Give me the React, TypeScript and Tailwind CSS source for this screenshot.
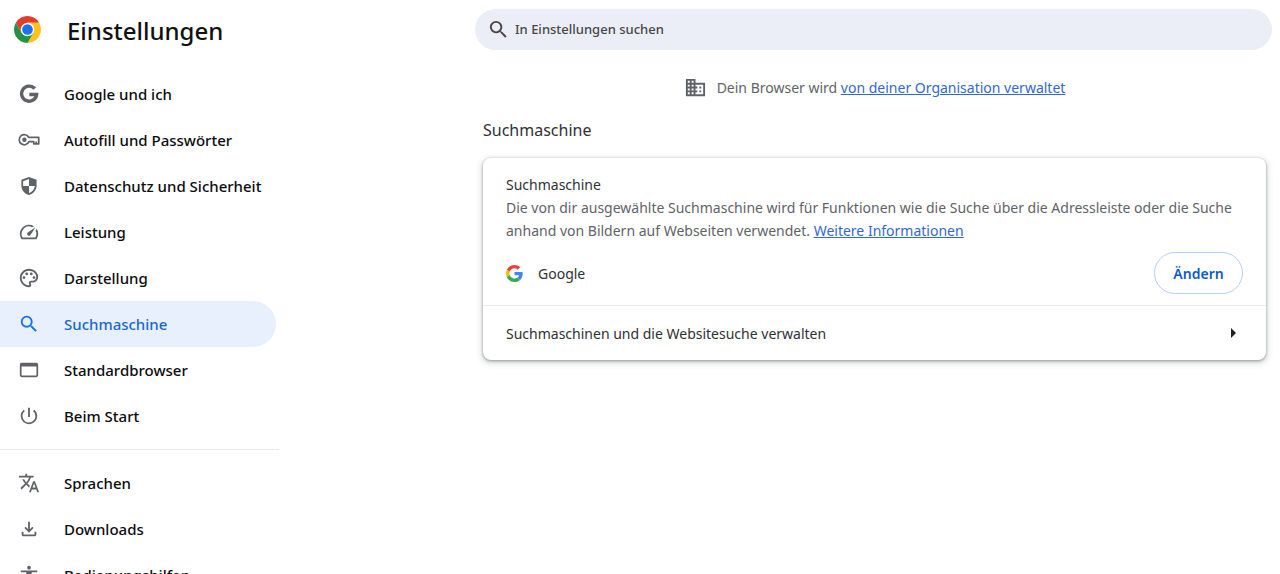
import type { ReactNode } from "react";
import {
  MdAccessibility,
  MdBusiness,
  MdOutlineFileDownload,
  MdOutlinePalette,
  MdPowerSettingsNew,
  MdSearch,
  MdSpeed,
  MdTranslate,
} from "react-icons/md";

function ChromeLogo() {
  return (
    <svg viewBox="0 0 48 48" className="size-[27px] shrink-0" aria-hidden="true">
      <path fill="#e33b2e" d="M24 12h20.78a24 24 0 0 0-41.56 0l10.39 18z" />
      <path fill="#fcc31e" d="M34.39 30 24 48a24 24 0 0 0 20.78-36H24z" />
      <path fill="#229342" d="M13.61 30 3.22 12A24 24 0 0 0 24 48l10.39-18z" />
      <circle cx="24" cy="24" r="12" fill="#fff" />
      <circle cx="24" cy="24" r="9.5" fill="#1a73e8" />
    </svg>
  );
}

function GoogleColor() {
  return (
    <svg viewBox="0 0 48 48" className="size-[17px] shrink-0" aria-hidden="true">
      <path fill="#ea4335" d="M24 9.5c3.54 0 6.71 1.22 9.21 3.6l6.85-6.85C35.9 2.38 30.47 0 24 0 14.62 0 6.51 5.38 2.56 13.22l7.98 6.19C12.43 13.72 17.74 9.5 24 9.5z" />
      <path fill="#4285f4" d="M46.98 24.55c0-1.57-.15-3.09-.38-4.55H24v9.02h12.94c-.58 2.96-2.26 5.48-4.78 7.18l7.73 6c4.51-4.18 7.09-10.36 7.09-17.65z" />
      <path fill="#fbbc05" d="M10.53 28.59c-.48-1.45-.76-2.99-.76-4.59s.27-3.14.76-4.59l-7.98-6.19C.92 16.46 0 20.12 0 24c0 3.88.92 7.54 2.56 10.78l7.97-6.19z" />
      <path fill="#34a853" d="M24 48c6.48 0 11.93-2.13 15.89-5.81l-7.73-6c-2.15 1.45-4.92 2.3-8.16 2.3-6.26 0-11.57-4.22-13.47-9.91l-7.98 6.19C6.51 42.62 14.62 48 24 48z" />
    </svg>
  );
}

function GoogleMono() {
  return (
    <svg viewBox="0 0 24 24" fill="none" stroke="currentColor" strokeWidth="3.7" aria-hidden="true">
      <path d="M18.3 6.2A8.2 8.2 0 1 0 20.3 12.5H12.4" />
    </svg>
  );
}

function KeyIcon() {
  return (
    <svg viewBox="0 0 24 24" fill="none" stroke="currentColor" strokeWidth="1.9" aria-hidden="true">
      <path d="M11.7 9.2H22.6V16.2H17.2V13.7H11.9A5.5 5.5 0 1 1 11.7 9.2Z" strokeLinejoin="round" />
      <path d="M19.9 13.6v2.4" />
      <circle cx="7" cy="11.7" r="2.4" fill="currentColor" stroke="none" />
    </svg>
  );
}

function ShieldIcon() {
  return (
    <svg viewBox="0 0 24 24" fill="currentColor" aria-hidden="true">
      <path
        fillRule="evenodd"
        d="M12 2.2 20.3 5.3V11.4C20.3 16.3 16.8 20.7 12 21.9 7.2 20.7 3.7 16.3 3.7 11.4V5.3ZM12 4.3 5.6 6.7V12H12ZM12 12V19.9C15.4 18.7 18 15.6 18.4 12Z"
      />
    </svg>
  );
}

function BrowserIcon() {
  return (
    <svg viewBox="0 0 24 24" fill="currentColor" aria-hidden="true">
      <path
        fillRule="evenodd"
        d="M4 4.2H20A2 2 0 0 1 22 6.2V17.8A2 2 0 0 1 20 19.8H4A2 2 0 0 1 2 17.8V6.2A2 2 0 0 1 4 4.2ZM3.9 8.2V17.9H20.1V8.2Z"
      />
    </svg>
  );
}

type Item = { label: string; icon: ReactNode; active?: boolean };

const mainItems: Item[] = [
  { label: "Google und ich", icon: <GoogleMono /> },
  { label: "Autofill und Passwörter", icon: <KeyIcon /> },
  { label: "Datenschutz und Sicherheit", icon: <ShieldIcon /> },
  { label: "Leistung", icon: <MdSpeed /> },
  { label: "Darstellung", icon: <MdOutlinePalette /> },
  { label: "Suchmaschine", icon: <MdSearch />, active: true },
  { label: "Standardbrowser", icon: <BrowserIcon /> },
  { label: "Beim Start", icon: <MdPowerSettingsNew /> },
];

const moreItems: Item[] = [
  { label: "Sprachen", icon: <MdTranslate /> },
  { label: "Downloads", icon: <MdOutlineFileDownload /> },
  { label: "Bedienungshilfen", icon: <MdAccessibility /> },
];

function MenuList({ items }: { items: Item[] }) {
  return (
    <ul className="pr-[3px]">
      {items.map(({ label, icon, active }) => (
        <li key={label}>
          <a
            href="#"
            aria-current={active ? "page" : undefined}
            className={
              active
                ? "flex h-[46px] items-center gap-6 rounded-r-full bg-[#e8f0fe] pl-[18px] text-[#1967d2]"
                : "flex h-[46px] items-center gap-6 pl-[18px] text-[#0c0c0e]"
            }
          >
            <span
              className={
                active
                  ? "shrink-0 text-[#1a73e8] [&>svg]:size-[22px]"
                  : "shrink-0 text-[#5f6368] [&>svg]:size-[22px]"
              }
            >
              {icon}
            </span>
            <span className="whitespace-nowrap">{label}</span>
          </a>
        </li>
      ))}
    </ul>
  );
}

export default function App() {
  return (
    <div className="flex h-screen overflow-hidden bg-white font-['Noto_Sans','Open_Sans',sans-serif] text-[14px] text-[#303134]">
      <aside className="w-[279px] shrink-0">
        <header className="flex h-[71px] items-start gap-[26px] pl-[14px] pt-4">
          <ChromeLogo />
          <h1 className="text-[24px] font-medium leading-[30px] text-[#111114]">Einstellungen</h1>
        </header>
        <nav aria-label="Einstellungen" className="text-[15px] font-medium">
          <MenuList items={mainItems} />
          <hr className="my-[10px] border-[#e8eaed]" />
          <MenuList items={moreItems} />
        </nav>
      </aside>

      <main className="ml-auto w-[805px] min-w-0 pr-2 pt-[9px]">
        <label className="flex h-[41px] items-center gap-[5px] rounded-full bg-[#ebeef7] pl-3">
          <MdSearch className="size-[23px] shrink-0 text-[#474747]" aria-hidden="true" />
          <input
            type="search"
            aria-label="In Einstellungen suchen"
            placeholder="In Einstellungen suchen"
            className="w-full bg-transparent text-[13px] font-medium outline-none placeholder:text-[#474747] placeholder:opacity-100"
          />
        </label>

        <div className="pl-2 pr-1.5">
          <p className="flex h-[75px] items-center justify-center gap-[10px] text-[#5f6368]">
            <MdBusiness className="size-[23px] shrink-0" aria-hidden="true" />
            <span>
              Dein Browser wird{" "}
              <a href="#" className="text-[#3367d6] underline">
                von deiner Organisation verwaltet
              </a>
            </span>
          </p>

          <h2 className="h-[33px] text-[16px] leading-[10px]">Suchmaschine</h2>

          <section className="rounded-lg bg-white shadow-[0_1px_3px_rgba(60,64,67,0.5),0_2px_6px_2px_rgba(60,64,67,0.15)]">
            <div className="px-[23px] pb-[11px] pt-[15px]">
              <h3 className="leading-[23px]">Suchmaschine</h3>
              <p className="leading-[23px] text-[#5f6368]">
                Die von dir ausgewählte Suchmaschine wird für Funktionen wie die Suche über die Adressleiste oder die
                Suche anhand von Bildern auf Webseiten verwendet.{" "}
                <a href="#" className="text-[#3367d6] underline">
                  Weitere Informationen
                </a>
              </p>
              <div className="mt-[10px] flex items-center gap-[15px]">
                <GoogleColor />
                <span>Google</span>
                <button
                  type="button"
                  className="ml-auto h-[42px] w-[89px] rounded-full border border-[#b5cdf9] font-semibold text-[#0b57d0]"
                >
                  Ändern
                </button>
              </div>
            </div>
            <button
              type="button"
              className="flex h-[55px] w-full items-center justify-between border-t border-[#e8eaed] pl-[23px] pr-[30px] text-left"
            >
              Suchmaschinen und die Websitesuche verwalten
              <svg viewBox="0 0 5 10" className="h-[10px] w-[5px] text-[#202124]" aria-hidden="true">
                <path d="M0 0l5 5-5 5z" fill="currentColor" />
              </svg>
            </button>
          </section>
        </div>
      </main>
    </div>
  );
}
